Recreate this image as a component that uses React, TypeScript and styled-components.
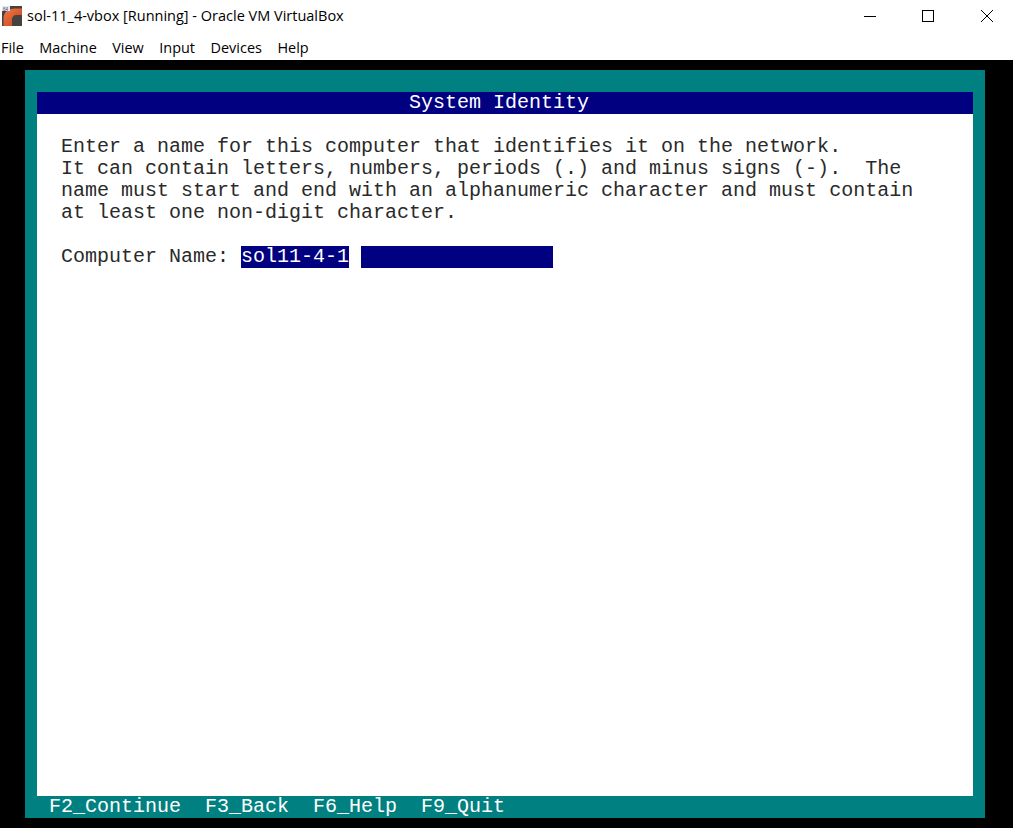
import styled, { createGlobalStyle } from 'styled-components'

const GlobalStyle = createGlobalStyle`
	html, body {
		margin: 0;
		padding: 0;
		background: #000;
	}
`

const Window = styled.div`
	width: 1013px;
	height: 828px;
	display: flex;
	flex-direction: column;
	background: #000;
	overflow: hidden;
`

const TitleBar = styled.div`
	height: 31px;
	display: flex;
	align-items: center;
	background: #fff;
	color: #000;
	font-family: "Open Sans", "Noto Sans", sans-serif;
	font-size: 14.5px;
	padding-left: 2px;
	gap: 5px;
`

const TitleText = styled.span`
	flex: 1;
`

const WindowControls = styled.div`
	display: flex;
	align-items: center;
	gap: 46px;
	padding-right: 20px;
`

const CloseButton = styled.div`
	display: flex;
	margin-left: 1px;
`

const MenuBar = styled.div`
	height: 29px;
	display: flex;
	align-items: center;
	gap: 15.5px;
	background: #fff;
	color: #000;
	font-family: "Open Sans", "Noto Sans", sans-serif;
	font-size: 14.45px;
	padding: 4px 0 0 1px;
	box-sizing: border-box;
`

const Screen = styled.div`
	flex: 1;
	padding: 10px 28px 10px 25px;
	display: flex;
`

const Console = styled.div`
	flex: 1;
	display: flex;
	flex-direction: column;
	background: #008080;
	padding: 22px 12px 0;
	font-family: "Liberation Mono", monospace;
	font-size: 20px;
	line-height: 22px;
	white-space: pre;
`

const Header = styled.div`
	height: 22px;
	background: #000080;
	color: #fff;
	padding-left: 372px;
`

const Body = styled.div`
	flex: 1;
	background: #fff;
	color: #2a2a2a;
	padding: 22px 24px;
`

const Paragraph = styled.div`
	margin-bottom: 22px;
`

const Field = styled.div`
	display: flex;
`

const FieldValue = styled.span<{ $width: number }>`
	display: block;
	width: ${p => p.$width}px;
	height: 22px;
	background: #000080;
	color: #fff;
`

const FieldGap = styled.span`
	width: 12px;
`

const Footer = styled.div`
	height: 22px;
	color: #fff;
	padding-left: 12px;
`

const AppIcon = () => (
	<svg width="20" height="20" viewBox="0 0 20 20">
		<defs>
			<linearGradient id="arc" x1="0" y1="0" x2="1" y2="1">
				<stop offset="0" stopColor="#f07a45" />
				<stop offset="1" stopColor="#c8401c" />
			</linearGradient>
		</defs>
		<rect width="20" height="20" fill="#46423f" />
		<path d="M1.500 20V13C1.500 6 6 2.500 13 2.500H20V9H15C11.500 9 10 11 10 14V20Z" fill="url(#arc)" />
		<rect x="0" y="0" width="8" height="5" fill="#e8e8f0" />
		<text x="1" y="4.500" fontSize="4.500" fontFamily="Liberation Sans" fill="#30408a">64</text>
	</svg>
)

const MinimizeIcon = () => (
	<svg width="12" height="12" viewBox="0 0 12 12">
		<path d="M0 6.500H12" stroke="#000" strokeWidth="1" fill="none" />
	</svg>
)

const MaximizeIcon = () => (
	<svg width="12" height="12" viewBox="0 0 12 12">
		<rect x="0.500" y="0.500" width="11" height="11" stroke="#000" strokeWidth="1" fill="none" />
	</svg>
)

const CloseIcon = () => (
	<svg width="12" height="12" viewBox="0 0 12 12">
		<path d="M0 0L12 12M12 0L0 12" stroke="#000" strokeWidth="1" fill="none" />
	</svg>
)

const menuItems = ['File', 'Machine', 'View', 'Input', 'Devices', 'Help']

const App = () => {
	return (
		<Window>
			<GlobalStyle />
			<TitleBar>
				<AppIcon />
				<TitleText>sol-11_4-vbox [Running] - Oracle VM VirtualBox</TitleText>
				<WindowControls>
					<MinimizeIcon />
					<MaximizeIcon />
					<CloseButton><CloseIcon /></CloseButton>
				</WindowControls>
			</TitleBar>
			<MenuBar>
				{menuItems.map(item => (
					<span key={item}>{item}</span>
				))}
			</MenuBar>
			<Screen>
				<Console>
					<Header>System Identity</Header>
					<Body>
						<Paragraph>
							<div>Enter a name for this computer that identifies it on the network.</div>
							<div>It can contain letters, numbers, periods (.) and minus signs (-).  The</div>
							<div>name must start and end with an alphanumeric character and must contain</div>
							<div>at least one non-digit character.</div>
						</Paragraph>
						<Field>
							<span>Computer Name: </span>
							<FieldValue $width={108}>sol11-4-1</FieldValue>
							<FieldGap />
							<FieldValue $width={192} />
						</Field>
					</Body>
					<Footer>F2_Continue  F3_Back  F6_Help  F9_Quit</Footer>
				</Console>
			</Screen>
		</Window>
	)
}

export default App
